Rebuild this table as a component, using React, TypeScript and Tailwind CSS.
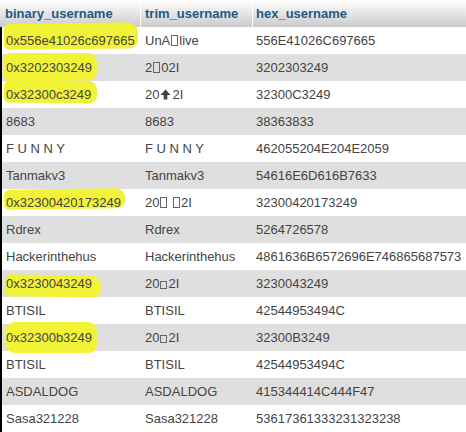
type Cell = string | JSX.Element;

function Box({ small }: { small?: boolean }) {
  return small ? (
    <span className="inline-block w-[7px] h-[8px] border border-[#666] mx-[1px] align-[-1px]" />
  ) : (
    <span className="inline-block w-[7px] h-[11px] border border-[#666] mx-[1px] align-[-1px]" />
  );
}

function UpArrow() {
  return (
    <svg className="inline-block w-[11px] h-[11px] mx-[1px] align-[-1px]" viewBox="0 0 12 12">
      <path d="M6 0.5 L11.5 6.5 L8 6.5 L8 11.5 L4 11.5 L4 6.5 L0.5 6.5 Z" fill="#444" />
    </svg>
  );
}

function Mark({ cls }: { cls: string }) {
  return <div className={"absolute bg-[#f2f236] " + cls} />;
}

const rows: { a: string; b: Cell; c: string; mark?: string }[] = [
  {
    a: "0x556e41026c697665",
    b: (
      <>
        UnA<Box />live
      </>
    ),
    c: "556E41026C697665",
    mark: "left-[2px] top-[-4px] w-[134px] h-[26px] rounded-[6px_10px_9px_5px] -rotate-[0.6deg]",
  },
  {
    a: "0x3202303249",
    b: (
      <>
        2<Box />02I
      </>
    ),
    c: "3202303249",
    mark: "left-[2px] top-[-1px] w-[93px] h-[27px] rounded-[6px_9px_8px_5px]",
  },
  {
    a: "0x32300c3249",
    b: (
      <>
        20<UpArrow />2I
      </>
    ),
    c: "32300C3249",
    mark: "left-[2px] top-[-1px] w-[93px] h-[23px] rounded-[6px_9px_8px_5px] rotate-[0.8deg]",
  },
  { a: "8683", b: "8683", c: "38363833" },
  { a: "F U N N Y", b: "F U N N Y", c: "462055204E204E2059" },
  { a: "Tanmakv3", b: "Tanmakv3", c: "54616E6D616B7633" },
  {
    a: "0x32300420173249",
    b: (
      <>
        20<Box />{" "}<Box />2I
      </>
    ),
    c: "32300420173249",
    mark: "left-[2px] top-[0px] w-[121px] h-[20px] rounded-[6px_9px_8px_5px] -rotate-[0.8deg]",
  },
  { a: "Rdrex", b: "Rdrex", c: "5264726578" },
  { a: "Hackerinthehus", b: "Hackerinthehus", c: "4861636B6572696E746865687573" },
  {
    a: "0x3230043249",
    b: (
      <>
        20<Box small />2I
      </>
    ),
    c: "3230043249",
    mark: "left-[3px] top-[5px] w-[96px] h-[22px] rounded-[6px_9px_8px_5px] rotate-[1deg]",
  },
  { a: "BTISIL", b: "BTISIL", c: "42544953494C" },
  {
    a: "0x32300b3249",
    b: (
      <>
        20<Box small />2I
      </>
    ),
    c: "32300B3249",
    mark: "left-[3px] top-[-2px] w-[92px] h-[31px] rounded-[10px_9px_8px_10px]",
  },
  { a: "BTISIL", b: "BTISIL", c: "42544953494C" },
  { a: "ASDALDOG", b: "ASDALDOG", c: "415344414C444F47" },
  { a: "Sasa321228", b: "Sasa321228", c: "53617361333231323238" },
];

export default function App() {
  return (
    <div className="w-[466px] h-[432px] overflow-hidden bg-white font-['Liberation_Sans',Arial,sans-serif] text-[13px]">
      <div className="flex h-[27px] bg-gradient-to-b from-white to-[#cbcbcb] font-bold text-[#235a81]">
        <div className="w-[141px] pl-[5px] flex items-center border-r border-white">binary_username</div>
        <div className="w-[112px] pl-[4px] flex items-center border-r border-white">trim_username</div>
        <div className="flex-1 pl-[3px] flex items-center">hex_username</div>
      </div>
      <div className="border-l-2 border-black">
        {rows.map((r, i) => (
          <div
            key={i}
            className={
              "flex h-[27px] text-[#444] " + (i % 2 === 0 ? "bg-white" : "bg-[#dfdfdf]")
            }
          >
            <div className="relative w-[139px] pl-[4px] flex items-center whitespace-pre">
              {r.mark && <Mark cls={r.mark} />}
              <span className="relative">{r.a}</span>
            </div>
            <div className="w-[112px] pl-[4px] flex items-center">
              <span className="whitespace-pre">{r.b}</span>
            </div>
            <div className="flex-1 pl-[3px] flex items-center whitespace-nowrap">{r.c}</div>
          </div>
        ))}
      </div>
    </div>
  );
}
